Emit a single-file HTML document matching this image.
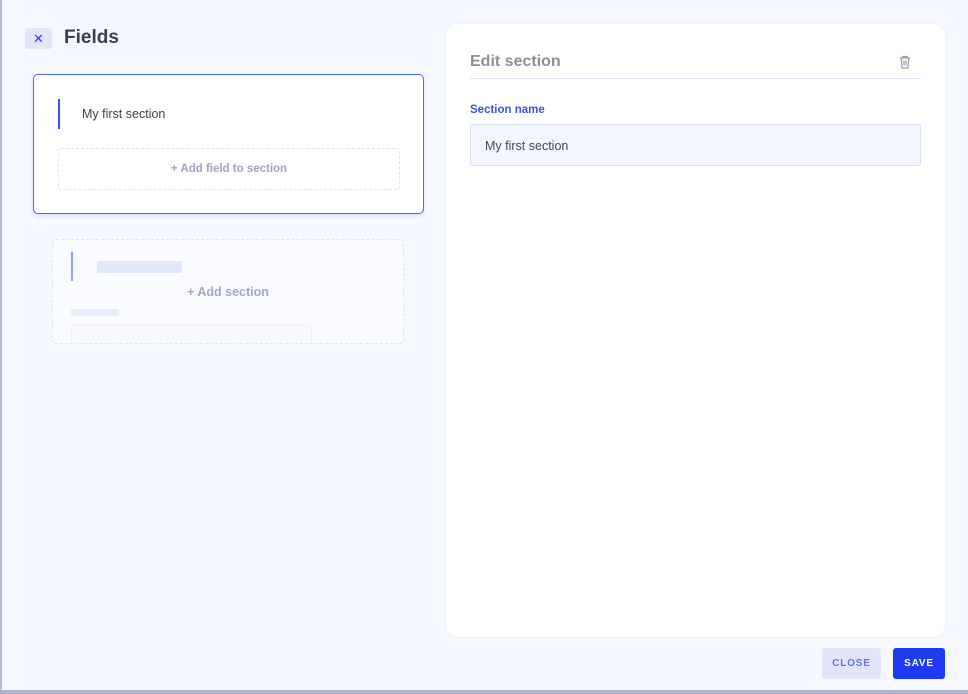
<!DOCTYPE html>
<html><head><meta charset="utf-8"><style>
*{box-sizing:border-box;margin:0;padding:0}
body{width:968px;height:694px;overflow:hidden;background:#f5f8ff;font-family:"Liberation Sans",sans-serif;position:relative}
.lb{position:absolute;left:0;top:0;width:2px;height:694px;background:#b3bcd6}
.bb{position:absolute;left:0;top:690px;width:968px;height:4px;background:#aab3cf}
.x{position:absolute;left:25px;top:28px;width:27px;height:21px;background:#e1e6fb;border-radius:3px;color:#2a3be6;font-size:13px;text-align:center;line-height:21px}
.title{position:absolute;left:64px;top:27px;font-size:19px;font-weight:bold;color:#3d3f48}
.card{position:absolute;left:33px;top:74px;width:391px;height:140px;background:#fff;border:1.5px solid #5068f0;border-radius:5px;box-shadow:0 2px 4px rgba(60,80,200,.15)}
.bar{position:absolute;width:2px;background:#3a4ff0}
.add{position:absolute;left:24px;top:73px;width:342px;height:42px;border:1px dashed #dde3f5;border-radius:3px;text-align:center;line-height:40px;font-size:11.5px;color:#9ea3c2;font-weight:bold}
.ghost{position:absolute;left:52px;top:239px;width:352px;height:105px;border:1px dashed #dce3f6;border-radius:4px;background:#f9fbff;overflow:hidden}
.panel{position:absolute;left:446px;top:24px;width:499px;height:613px;background:#fff;border-radius:12px;box-shadow:0 0 3px rgba(150,160,200,.15)}
.btn{position:absolute;top:648px;height:31px;border-radius:3px;font-size:10px;font-weight:bold;letter-spacing:.8px;text-align:center;line-height:31px}
</style></head><body>
<div class="lb"></div><div class="bb"></div>
<div class="x">✕</div>
<div class="title">Fields</div>
<div class="card">
 <div class="bar" style="left:24px;top:24px;height:30px"></div>
 <div style="position:absolute;left:48px;top:32px;font-size:12.5px;color:#3d3f48">My first section</div>
 <div class="add">+ Add field to section</div>
</div>
<div class="ghost">
 <div class="bar" style="left:18px;top:12px;height:29px;background:#90a0f0"></div>
 <div style="position:absolute;left:44px;top:21px;width:85px;height:12px;background:#e2e8fc"></div>
 <div style="position:absolute;left:0;width:100%;top:45px;text-align:center;font-size:12.5px;color:#a2a7c4;font-weight:bold">+ Add section</div>
 <div style="position:absolute;left:18px;top:69px;width:48px;height:7px;background:#e8edfc"></div>
 <div style="position:absolute;left:18px;top:84px;width:241px;height:30px;border:1px solid #eef1fb;border-radius:3px;background:#f7f9ff"></div>
</div>
<div class="panel">
 <div style="position:absolute;left:24px;top:29px;font-size:16px;font-weight:bold;color:#8e8f96">Edit section</div>
 <svg style="position:absolute;left:453px;top:31px" width="12" height="14" viewBox="0 0 12 14" fill="none" stroke="#9a9ba2" stroke-width="1.2"><path d="M1 3h10M4 3V1.5h4V3M2.3 3l.7 10h6l.7-10M5 5.5v5M7 5.5v5"/></svg>
 <div style="position:absolute;left:24px;top:54px;width:451px;height:1px;background:#dce3fb"></div>
 <div style="position:absolute;left:24px;top:80px;font-size:11.5px;font-weight:bold;color:#3b50ef">Section name</div>
 <div style="position:absolute;left:24px;top:100px;width:451px;height:42px;background:#f3f6ff;border:1px solid #d9e1fa;border-radius:3px;font-size:12.5px;color:#45474f;line-height:42px;padding-left:14px">My first section</div>
</div>
<div class="btn" style="left:822px;width:59px;background:#e1e6fb;color:#6474e6">CLOSE</div>
<div class="btn" style="left:893px;width:52px;background:#1f3bf2;color:#fff">SAVE</div>
</body></html>
